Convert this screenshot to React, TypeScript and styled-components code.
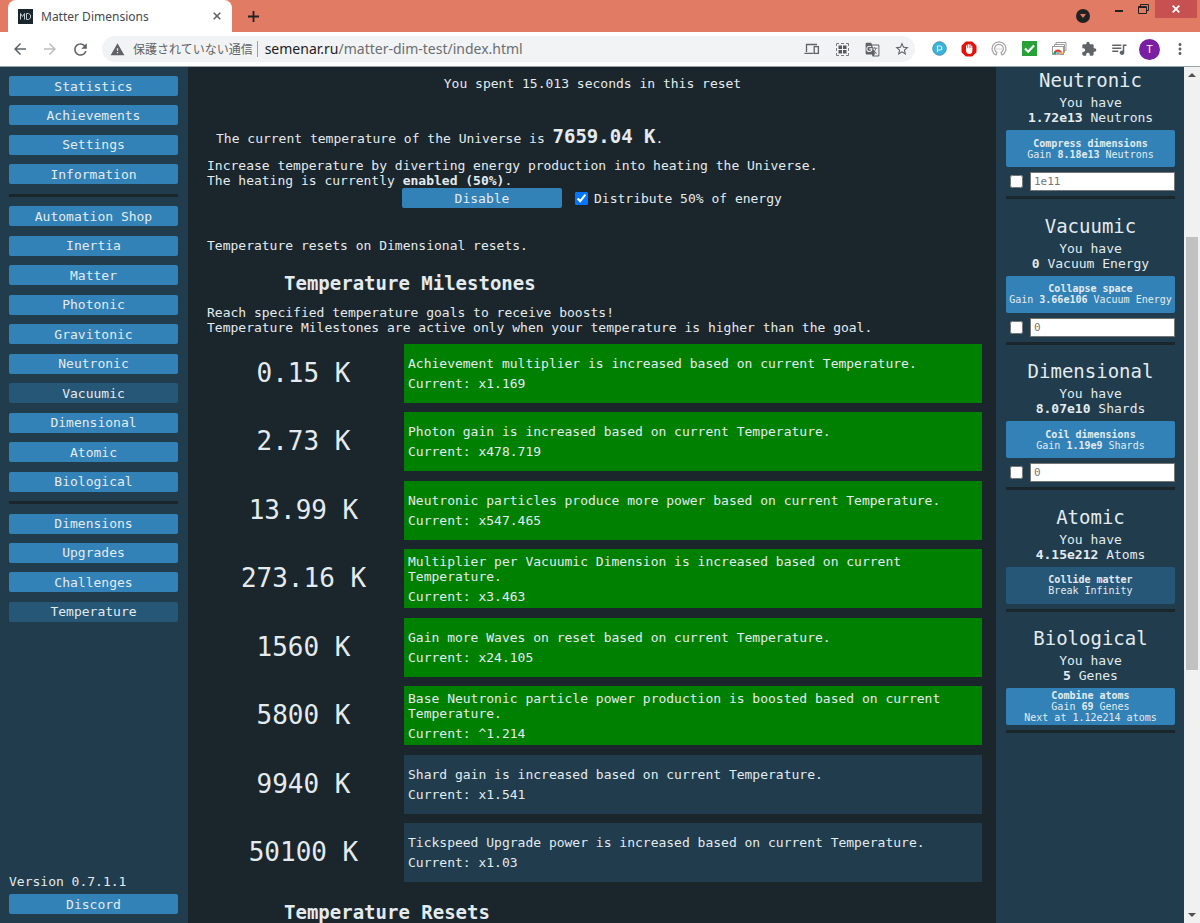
import React from "react";
import styled, { createGlobalStyle } from "styled-components";
import {
  MdArrowBack,
  MdArrowForward,
  MdRefresh,
  MdWarning,
  MdGTranslate,
  MdStarBorder,
  MdExtension,
  MdQueueMusic,
  MdMoreVert,
} from "react-icons/md";

const color = {
  strip: "#e17b64",
  page: "#1b262c",
  panel: "#203c4d",
  button: "#3282b8",
  buttonDim: "#275776",
  text: "#e3ebef",
  done: "#008000",
};

const GlobalStyle = createGlobalStyle`
  *, *::before, *::after { box-sizing: border-box; }
  body { margin: 0; background: ${color.page}; }
  h1, h2, h3, p, ul { margin: 0; padding: 0; }
  ul { list-style: none; }
`;

/* ---------- Browser frame ---------- */

const Window = styled.div`
  display: flex;
  flex-direction: column;
  height: 100vh;
  overflow: hidden;
`;

const TabStrip = styled.header`
  display: flex;
  flex: none;
  height: 32px;
  padding-left: 8px;
  background: ${color.strip};
  font-family: "Noto Sans", sans-serif;
`;

const Tab = styled.div`
  display: flex;
  align-items: center;
  gap: 8px;
  width: 224px;
  padding: 0 9px 0 10px;
  border-radius: 8px 8px 0 0;
  background: #fff;
  color: #45494d;
  font-size: 12px;
`;

const TabTitle = styled.span`
  flex: 1;
  white-space: nowrap;
`;

const IconButton = styled.button<{ $size?: number }>`
  display: flex;
  align-items: center;
  justify-content: center;
  flex: none;
  width: ${(p) => p.$size ?? 20}px;
  height: ${(p) => p.$size ?? 20}px;
  padding: 0;
  border: 0;
  background: none;
  color: #5f6368;
`;

const NewTab = styled(IconButton)`
  align-self: center;
  margin-left: 11px;
  color: #222;
`;

const WindowControls = styled.div`
  display: flex;
  align-items: flex-start;
  margin-left: auto;
  padding-right: 3px;
`;

const TabSearch = styled(IconButton)`
  margin: 8px 14px 0 0;
  height: 16px;
`;

const WindowButton = styled(IconButton)`
  width: 24px;
  height: 18px;
  color: #222;
`;

const CloseWindow = styled(WindowButton)`
  width: 42px;
  background: #c75050;
  color: #fff;
`;

const Toolbar = styled.div`
  display: flex;
  align-items: center;
  flex: none;
  height: 35px;
  padding: 0 10px 0 10px;
  border-bottom: 1px solid #98a3a9;
  background: #fff;
`;

const NavButtons = styled.div`
  display: flex;
  gap: 10px;
`;

const AddressBar = styled.div`
  display: flex;
  align-items: center;
  flex: 1;
  height: 26px;
  margin-left: 12px;
  padding: 0 3px 0 8px;
  border-radius: 13px;
  background: #f1f3f4;
  color: #5f6368;
  font-family: "Noto Sans", "Noto Sans CJK JP", sans-serif;
`;

const Insecure = styled.span`
  margin: 0 7px 0 8px;
  padding-right: 4px;
  border-right: 1px solid #9aa0a6;
  font-family: "Noto Sans CJK JP", sans-serif;
  font-size: 12px;
  line-height: 16px;
  white-space: nowrap;
`;

const Url = styled.span`
  flex: 1;
  color: #6a6e73;
  font-size: 14px;
  line-height: 20px;
  white-space: nowrap;
`;

const Host = styled.span`
  color: #202124;
`;

const IconRow = styled.div`
  display: flex;
  gap: 10px;
`;

const Extensions = styled(IconRow)`
  margin-left: 14px;
`;

const Avatar = styled.button`
  flex: none;
  width: 21px;
  height: 21px;
  padding: 0;
  border: 0;
  border-radius: 50%;
  background: #7b1fa2;
  color: #fff;
  font: 11px/21px Roboto, sans-serif;
`;

/* ---------- Game page ---------- */

const Viewport = styled.div`
  display: flex;
  flex: 1;
  min-height: 0;
  overflow: hidden;
  background: ${color.page};
  color: ${color.text};
  font: 13px/15px "DejaVu Sans Mono", monospace;
`;

const Sidebar = styled.aside`
  display: flex;
  flex-direction: column;
  flex: none;
  width: 188px;
  padding: 9px 10px 9px 9px;
  background: ${color.panel};
`;

const Menu = styled.nav`
  display: flex;
  flex-direction: column;
  justify-content: space-between;
  min-height: 546px;
`;

const GameButton = styled.button<{ $dim?: boolean }>`
  display: block;
  flex: none;
  height: 20px;
  padding: 0;
  border: 0;
  border-radius: 2px;
  background: ${(p) => (p.$dim ? color.buttonDim : color.button)};
  color: ${color.text};
  font: inherit;
`;

const Divider = styled.hr`
  flex: none;
  width: 100%;
  height: 3px;
  margin: 0;
  border: 0;
  background: ${color.page};
`;

const SidebarFooter = styled.footer`
  display: flex;
  flex-direction: column;
  gap: 5px;
  margin-top: auto;
`;

const Main = styled.main`
  flex: 1;
  min-width: 0;
  padding: 9px 14px 0 19px;
`;

const ResetTime = styled.p`
  padding-right: 4px;
  text-align: center;
`;

const CurrentTemperature = styled.p`
  margin-top: 32px;
  padding-left: 9px;
  line-height: 26px;
`;

const Degrees = styled.strong`
  font-size: 19px;
`;

const Paragraph = styled.p`
  margin-top: 6px;
`;

const HeatingControls = styled.div`
  display: flex;
  align-items: center;
  gap: 13px;
  padding-left: 195px;
`;

const ToggleHeating = styled(GameButton)`
  width: 160px;
`;

const CheckLabel = styled.label`
  display: flex;
  align-items: center;
  gap: 6px;
`;

const Checkbox = styled.input`
  flex: none;
  width: 13px;
  height: 13px;
  margin: 0;
  accent-color: #0075ff;
`;

const ResetNote = styled.p`
  margin-top: 30px;
`;

const Heading = styled.h2`
  margin-top: 18px;
  padding-left: 77px;
  font-size: 19px;
  line-height: 24px;
`;

const Intro = styled(Paragraph)`
  margin-top: 10px;
`;

const Milestones = styled.ul`
  display: flex;
  flex-direction: column;
  justify-content: space-between;
  min-height: 538px;
  margin-top: 9px;
`;

const Milestone = styled.li`
  display: flex;
  align-items: stretch;
  height: 59px;
`;

const Goal = styled.div`
  display: flex;
  align-items: center;
  justify-content: center;
  width: 197px;
  padding-right: 4px;
  font-size: 26px;
`;

const Reward = styled.div<{ $done: boolean }>`
  display: flex;
  flex: 1;
  flex-direction: column;
  justify-content: center;
  gap: 5px;
  padding: 0 4px;
  background: ${(p) => (p.$done ? color.done : color.panel)};
`;

const Resources = styled.aside`
  flex: none;
  width: 188px;
  padding: 1px 9px 0 10px;
  background: ${color.panel};
  text-align: center;
`;

const ResourceList = styled.div`
  display: flex;
  flex-direction: column;
  justify-content: space-between;
  min-height: 665px;
`;

const Resource = styled.section`
  display: flex;
  flex-direction: column;
  gap: 5px;
`;

const ResourceName = styled.h3`
  margin-bottom: 2px;
  font-size: 19px;
  font-weight: 400;
  line-height: 25px;
`;

const ResetButton = styled(GameButton)`
  height: 37px;
  font-size: 10px;
  line-height: 11px;
  white-space: nowrap;
`;

const AutoRow = styled.div`
  display: flex;
  align-items: center;
  gap: 7px;
  height: 19px;
  padding-left: 4px;
`;

const Amount = styled.input`
  flex: 1;
  min-width: 0;
  height: 19px;
  padding: 0 3px;
  border: 1px solid #767676;
  background: #fff;
  color: #777;
  font: 11px/15px "DejaVu Sans Mono", monospace;
`;

const Scrollbar = styled.div`
  display: flex;
  flex-direction: column;
  align-items: center;
  justify-content: space-between;
  flex: none;
  width: 16px;
  padding: 6px 0;
  background: #f1f1f1;
`;

const Thumb = styled.div`
  flex: 0 1 433px;
  width: 12px;
  margin-bottom: 84px;
  background: #c1c1c1;
`;

const menuGroups = [
  ["Statistics", "Achievements", "Settings", "Information"],
  ["Automation Shop", "Inertia", "Matter", "Photonic", "Gravitonic", "Neutronic", "Vacuumic", "Dimensional", "Atomic", "Biological"],
  ["Dimensions", "Upgrades", "Challenges", "Temperature"],
];
const dimmed = ["Vacuumic", "Temperature"];

const milestones = [
  { goal: "0.15 K", text: "Achievement multiplier is increased based on current Temperature.", now: "x1.169", done: true },
  { goal: "2.73 K", text: "Photon gain is increased based on current Temperature.", now: "x478.719", done: true },
  { goal: "13.99 K", text: "Neutronic particles produce more power based on current Temperature.", now: "x547.465", done: true },
  { goal: "273.16 K", text: "Multiplier per Vacuumic Dimension is increased based on current Temperature.", now: "x3.463", done: true },
  { goal: "1560 K", text: "Gain more Waves on reset based on current Temperature.", now: "x24.105", done: true },
  { goal: "5800 K", text: "Base Neutronic particle power production is boosted based on current Temperature.", now: "^1.214", done: true },
  { goal: "9940 K", text: "Shard gain is increased based on current Temperature.", now: "x1.541", done: false },
  { goal: "50100 K", text: "Tickspeed Upgrade power is increased based on current Temperature.", now: "x1.03", done: false },
];

type ResourceData = {
  name: string;
  amount: string;
  unit: string;
  action: string;
  gain?: string;
  note?: string;
  auto?: string;
  dim?: boolean;
};

const resources: ResourceData[] = [
  { name: "Neutronic", amount: "1.72e13", unit: "Neutrons", action: "Compress dimensions", gain: "8.18e13", auto: "1e11" },
  { name: "Vacuumic", amount: "0", unit: "Vacuum Energy", action: "Collapse space", gain: "3.66e106", auto: "0" },
  { name: "Dimensional", amount: "8.07e10", unit: "Shards", action: "Coil dimensions", gain: "1.19e9", auto: "0" },
  { name: "Atomic", amount: "4.15e212", unit: "Atoms", action: "Collide matter", note: "Break Infinity", dim: true },
  { name: "Biological", amount: "5", unit: "Genes", action: "Combine atoms", gain: "69", note: "Next at 1.12e214 atoms" },
];

/* ---------- Drawn icons ---------- */

const Favicon = () => (
  <svg width="15" height="15" viewBox="0 0 15 15" aria-hidden="true">
    <rect width="15" height="15" fill="#1b262c" />
    <path d="M2.5 10.5v-6l2 3 2-3v6M8.5 4.5v6h2l2-1.500v-3l-2-1.500z" fill="none" stroke="#c3ccd1" strokeWidth="1" />
  </svg>
);

const Cross = ({ size = 8, width = 1.6 }: { size?: number; width?: number }) => (
  <svg width={size} height={size} viewBox="0 0 8 8" aria-hidden="true">
    <path d="M.7.7l6.600 6.600M7.300.7L.7 7.300" stroke="currentColor" strokeWidth={width} />
  </svg>
);

const Devices = () => (
  <svg width="16" height="14" viewBox="0 0 16 14" fill="none" stroke="#5f6368" strokeWidth="1.300">
    <path d="M2.500 10V2.500H13M.5 11.400h9" />
    <rect x="10.200" y="4.600" width="4.200" height="6.800" />
  </svg>
);

const QrCode = () => (
  <svg width="15" height="15" viewBox="0 0 15 15">
    <path d="M1.500 4V1.500H4M11 1.500h2.500V4M13.500 11v2.500H11M4 13.500H1.500V11M6 1.500h3M6 13.500h3M1.500 6v3M13.500 6v3" fill="none" stroke="#777b7f" />
    <path d="M3.500 3.500h3.500v3.500H3.500zM8 3.500h3.500v3.500H8zM3.500 8h3.500v3.500H3.500zM8 8h3.500v3.500H8z" fill="#55595d" />
  </svg>
);

const BlueDisc = () => (
  <svg width="15" height="15" viewBox="0 0 15 15">
    <circle cx="7.500" cy="7.500" r="6.800" fill="#35b5dc" stroke="#5f8fa0" />
    <path d="M5.500 11V5h2.300a2 2 0 010 4H5.500" fill="none" stroke="#d3f2fb" strokeWidth="1.200" />
  </svg>
);

const StopHand = () => (
  <svg width="16" height="16" viewBox="0 0 16 16">
    <path d="M4.800.5h6.400l4.300 4.300v6.400l-4.300 4.300H4.800L.5 11.200V4.800z" fill="#e3120b" />
    <path d="M5.600 8V4.800M7.300 7V3.500M9 7V3.500M10.700 8V5" stroke="#fff" strokeWidth="1.200" strokeLinecap="round" />
    <path d="M5 7h6.300v3c0 1.900-1.100 3-2.900 3S5 11.800 5 9.800z" fill="#fff" />
  </svg>
);

const GreyRing = () => (
  <svg width="16" height="16" viewBox="0 0 16 16" fill="none" stroke="#a2a2a2">
    <path d="M5 14A6.900 6.900 0 1111 14l-1-2.500a4.300 4.300 0 10-4 0z" strokeWidth="1.200" />
    <path d="M5.500 8h1M7.500 8h1M9.500 8h1" strokeWidth="1.200" />
  </svg>
);

const GreenCheck = () => (
  <svg width="15" height="15" viewBox="0 0 15 15">
    <rect width="15" height="15" fill="#28a138" />
    <path d="M3 7.500l3.200 3.200L12 4.500" fill="none" stroke="#fff" strokeWidth="2.200" />
  </svg>
);

const CardStack = () => (
  <svg width="15" height="15" viewBox="0 0 15 15">
    <path d="M4 3V1.500h10v8h-1.500" fill="none" stroke="#9b9b9b" />
    <path d="M2.500 5V3.500h10v8H11" fill="none" stroke="#9b9b9b" />
    <rect x=".5" y="5.500" width="11" height="8" fill="#fff" stroke="#9b9b9b" />
    <path d="M1.500 13a4.500 4.500 0 019 0z" fill="#db4437" />
    <path d="M1.500 13a4.500 4.500 0 011-2.800L6 13z" fill="#0f9d58" />
    <path d="M10.500 13a4.500 4.500 0 00-1-2.800L6 13z" fill="#f4b400" />
    <path d="M4 13a2 2 0 014 0z" fill="#4285f4" stroke="#fff" strokeWidth=".5" />
  </svg>
);

const Arrow = ({ down }: { down?: boolean }) => (
  <svg width="8" height="4" viewBox="0 0 8 4" aria-hidden="true">
    <path d={down ? "M0 0h8L4 4z" : "M0 4h8L4 0z"} fill="#505050" />
  </svg>
);

/* ---------- Sections ---------- */

const BrowserFrame = () => (
  <>
    <TabStrip>
      <Tab>
        <Favicon />
        <TabTitle>Matter Dimensions</TabTitle>
        <IconButton $size={12} aria-label="Close tab"><Cross /></IconButton>
      </Tab>
      <NewTab aria-label="New tab">
        <svg width="11" height="11" viewBox="0 0 11 11"><path d="M5.500 0v11M0 5.500h11" stroke="#222" strokeWidth="1.800" /></svg>
      </NewTab>
      <WindowControls>
        <TabSearch aria-label="Search tabs">
          <svg width="14" height="14" viewBox="0 0 14 14">
            <circle cx="7" cy="7" r="7" fill="#222" />
            <path d="M4 5h6L7 9z" fill={color.strip} />
          </svg>
        </TabSearch>
        <WindowButton aria-label="Minimize">
          <svg width="8" height="8" viewBox="0 0 8 8"><path d="M0 6h8" stroke="#222" strokeWidth="2" /></svg>
        </WindowButton>
        <WindowButton aria-label="Restore">
          <svg width="11" height="10" viewBox="0 0 11 10" fill="none" stroke="#222">
            <path d="M2.500 2V.5h8v6H9M.5 2.500h8v7h-8zM.5 3.500h8" />
          </svg>
        </WindowButton>
        <CloseWindow aria-label="Close window"><Cross size={8} width={1.8} /></CloseWindow>
      </WindowControls>
    </TabStrip>
    <Toolbar>
      <NavButtons>
        <IconButton aria-label="Back"><MdArrowBack size={18} /></IconButton>
        <IconButton aria-label="Forward"><MdArrowForward size={18} color="#bbbdbf" /></IconButton>
        <IconButton aria-label="Reload"><MdRefresh size={19} /></IconButton>
      </NavButtons>
      <AddressBar>
        <MdWarning size={15} />
        <Insecure>保護されていない通信</Insecure>
        <Url><Host>semenar.ru</Host>/matter-dim-test/index.html</Url>
        <IconRow>
          <IconButton aria-label="Send to devices"><Devices /></IconButton>
          <IconButton aria-label="QR code"><QrCode /></IconButton>
          <IconButton aria-label="Translate"><MdGTranslate size={15} /></IconButton>
          <IconButton aria-label="Bookmark"><MdStarBorder size={16} /></IconButton>
        </IconRow>
      </AddressBar>
      <Extensions>
        <IconButton aria-label="Blue extension"><BlueDisc /></IconButton>
        <IconButton aria-label="Ad blocker"><StopHand /></IconButton>
        <IconButton aria-label="Ring extension"><GreyRing /></IconButton>
        <IconButton aria-label="Check extension"><GreenCheck /></IconButton>
        <IconButton aria-label="Cards extension"><CardStack /></IconButton>
        <IconButton aria-label="Extensions"><MdExtension size={16} /></IconButton>
        <IconButton aria-label="Media"><MdQueueMusic size={18} /></IconButton>
        <Avatar>T</Avatar>
        <IconButton aria-label="Menu"><MdMoreVert size={18} /></IconButton>
      </Extensions>
    </Toolbar>
  </>
);

const ResourceBlock = ({ data }: { data: ResourceData }) => (
  <Resource>
    <div>
      <ResourceName>{data.name}</ResourceName>
      <p>You have</p>
      <p><strong>{data.amount}</strong> {data.unit}</p>
    </div>
    <ResetButton $dim={data.dim}>
      <strong>{data.action}</strong>
      {data.gain && (<><br />Gain <strong>{data.gain}</strong> {data.unit}</>)}
      {data.note && (<><br />{data.note}</>)}
    </ResetButton>
    {data.auto && (
      <AutoRow>
        <Checkbox type="checkbox" aria-label={`Automate ${data.name}`} />
        <Amount type="text" defaultValue={data.auto} aria-label={`${data.name} threshold`} />
      </AutoRow>
    )}
    <Divider />
  </Resource>
);

export default function App() {
  return (
    <Window>
      <GlobalStyle />
      <BrowserFrame />
      <Viewport>
        <Sidebar>
          <Menu>
            {menuGroups.map((group, i) => (
              <React.Fragment key={i}>
                {i > 0 && <Divider />}
                {group.map((name) => (
                  <GameButton key={name} $dim={dimmed.includes(name)}>{name}</GameButton>
                ))}
              </React.Fragment>
            ))}
          </Menu>
          <SidebarFooter>
            <p>Version 0.7.1.1</p>
            <GameButton>Discord</GameButton>
          </SidebarFooter>
        </Sidebar>
        <Main>
          <ResetTime>You spent 15.013 seconds in this reset</ResetTime>
          <CurrentTemperature>
            The current temperature of the Universe is <Degrees>7659.04 K</Degrees>.
          </CurrentTemperature>
          <Paragraph>
            Increase temperature by diverting energy production into heating the Universe.
            <br />
            The heating is currently <strong>enabled (50%)</strong>.
          </Paragraph>
          <HeatingControls>
            <ToggleHeating>Disable</ToggleHeating>
            <CheckLabel>
              <Checkbox type="checkbox" defaultChecked />
              Distribute 50% of energy
            </CheckLabel>
          </HeatingControls>
          <ResetNote>Temperature resets on Dimensional resets.</ResetNote>
          <Heading>Temperature Milestones</Heading>
          <Intro>
            Reach specified temperature goals to receive boosts!
            <br />
            Temperature Milestones are active only when your temperature is higher than the goal.
          </Intro>
          <Milestones>
            {milestones.map((m) => (
              <Milestone key={m.goal}>
                <Goal>{m.goal}</Goal>
                <Reward $done={m.done}>
                  <p>{m.text}</p>
                  <p>Current: {m.now}</p>
                </Reward>
              </Milestone>
            ))}
          </Milestones>
          <Heading>Temperature Resets</Heading>
        </Main>
        <Resources>
          <ResourceList>
            {resources.map((r) => (
              <ResourceBlock key={r.name} data={r} />
            ))}
          </ResourceList>
        </Resources>
        <Scrollbar>
          <Arrow />
          <Thumb />
          <Arrow down />
        </Scrollbar>
      </Viewport>
    </Window>
  );
}
